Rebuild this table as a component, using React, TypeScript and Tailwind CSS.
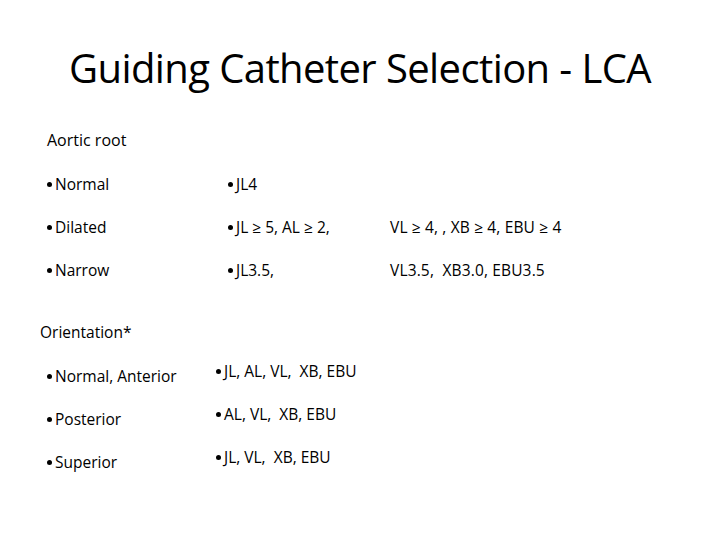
export default function App() {
  const aortic = [
    ["Normal", "JL4", ""],
    ["Dilated", "JL ≥ 5, AL ≥ 2,", "VL ≥ 4, , XB ≥ 4, EBU ≥ 4"],
    ["Narrow", "JL3.5,", "VL3.5,  XB3.0, EBU3.5"],
  ];
  const orient = [
    ["Normal, Anterior", "JL, AL, VL,  XB, EBU"],
    ["Posterior", "AL, VL,  XB, EBU"],
    ["Superior", "JL, VL,  XB, EBU"],
  ];
  const Dot = () => <span className="inline-block w-[5px] h-[5px] rounded-full bg-black mr-[3px] mb-[3px] align-middle" />;
  return (
    <div
      className="w-[720px] h-[540px] bg-white text-black overflow-hidden"
      style={{ fontFamily: '"Open Sans", "Noto Sans", sans-serif' }}
    >
      <h1 className="pt-[42px] text-center text-[40px] leading-[52px] tracking-[-0.6px]">
        Guiding Catheter Selection - LCA
      </h1>
      <div className="mt-[36px] pl-[47px] text-[16px] leading-[20px]">Aortic root</div>
      <div className="mt-[13px] pl-[47px] text-[15.5px]">
        {aortic.map((r, i) => (
          <div key={i} className="flex h-[43px] items-center whitespace-pre">
            <div className="w-[181px]"><Dot />{r[0]}</div>
            <div className="w-[162px]"><Dot />{r[1]}</div>
            <div className="tracking-[0.15px]">{r[2]}</div>
          </div>
        ))}
      </div>
      <div className="mt-[30px] pl-[40px] text-[15.5px] leading-[20px]">Orientation*</div>
      <div className="mt-[9px] pl-[47px] text-[15.5px]">
        {orient.map((r, i) => (
          <div key={i} className="flex h-[43px] items-center whitespace-pre">
            <div className="w-[169px] pt-[8px]"><Dot />{r[0]}</div>
            <div className="pb-[2px]"><Dot />{r[1]}</div>
          </div>
        ))}
      </div>
    </div>
  );
}
